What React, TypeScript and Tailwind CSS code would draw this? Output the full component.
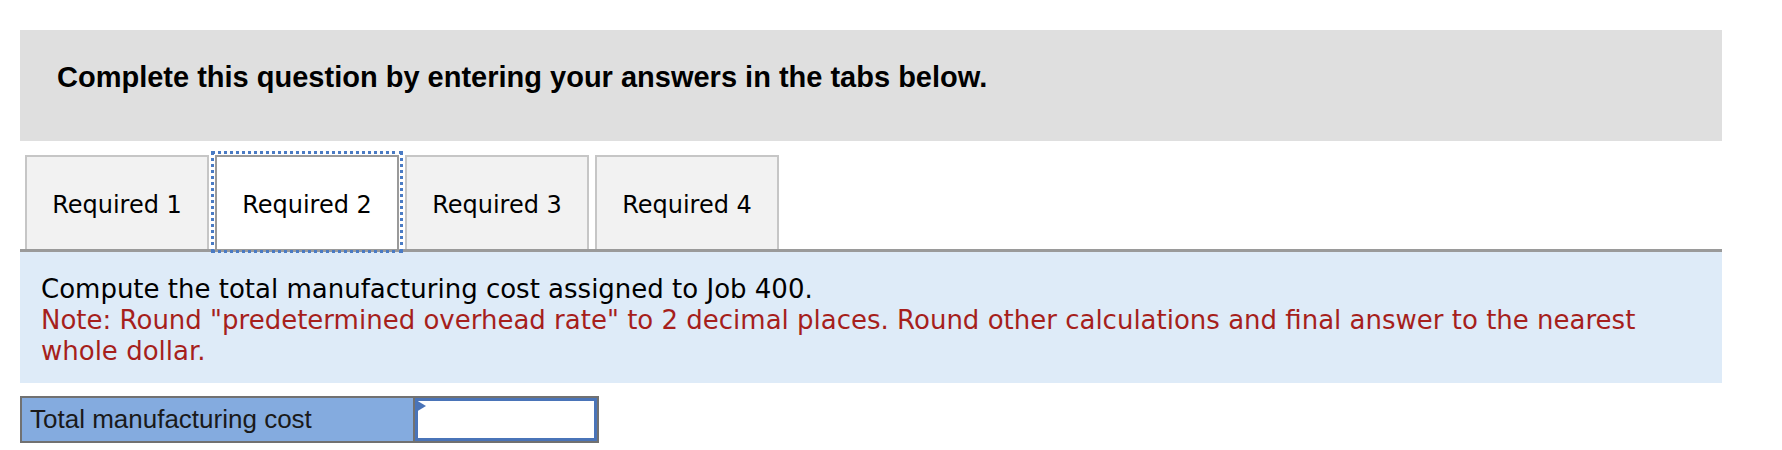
import { useState } from "react";

const TABS = ["Required 1", "Required 2", "Required 3", "Required 4"];

export default function App() {
  const [active, setActive] = useState(1);
  const [value, setValue] = useState("");

  return (
    <div className="min-h-[450px] bg-white pt-[30px] pl-[20px]">
      <div className="w-[1702px]">
        <div className="h-[111px] bg-[#dfdfdf] pl-[37px] pt-[31px]">
          <h2 className="text-[29px] leading-[33px] font-bold text-black [font-family:'Liberation_Sans',Arial,sans-serif]">
            Complete this question by entering your answers in the tabs below.
          </h2>
        </div>

        <div className="mt-[14px] flex gap-[6px] pl-[5px] [font-family:'DejaVu_Sans',Verdana,sans-serif]">
          {TABS.map((t, i) => (
            <button
              key={t}
              type="button"
              onClick={() => setActive(i)}
              className={
                i === active
                  ? "relative z-10 h-[94px] w-[184px] border-2 border-b-0 border-[#9a9a9a] bg-white pt-[3px] text-[24px] text-black outline-[3px] outline-dotted outline-offset-[1px] outline-[#4a7bc4]"
                  : "h-[94px] w-[184px] border-2 border-b-0 border-[#c6c6c6] bg-[#f2f2f2] pt-[3px] text-[24px] text-black"
              }
            >
              {t}
            </button>
          ))}
        </div>

        <div className="border-t-[3px] border-[#9a9a9a] bg-[#deebf8] pl-[21px] pr-[21px] pt-[22px] pb-[16px] text-[26px] leading-[31px] [font-family:'DejaVu_Sans',Verdana,sans-serif]">
          <p className="text-black">Compute the total manufacturing cost assigned to Job 400.</p>
          <p className="text-[#a61f1c]">
            Note: Round "predetermined overhead rate" to 2 decimal places. Round other calculations and final answer to the nearest whole dollar.
          </p>
        </div>

        <div className="mt-[13px] flex h-[47px] w-[579px] border-2 border-[#717171]">
          <div className="flex w-[393px] items-center border-r-2 border-[#717171] bg-[#84abdf] pl-[8px] text-[26px] text-[#1a1a1a] [font-family:'Liberation_Sans',Arial,sans-serif]">
            Total manufacturing cost
          </div>
          <div className="relative flex-1">
            <input
              type="text"
              value={value}
              onChange={(e) => setValue(e.target.value)}
              aria-label="Total manufacturing cost"
              className="h-full w-full border-[3px] border-[#4a74b8] bg-white px-2 text-[21px] outline-none"
            />
            <svg className="pointer-events-none absolute left-[1px] top-[2px]" width="10" height="12" viewBox="0 0 10 12">
              <polygon points="0,0 10,6 0,12" fill="#4a74b8" />
            </svg>
          </div>
        </div>
      </div>
    </div>
  );
}
